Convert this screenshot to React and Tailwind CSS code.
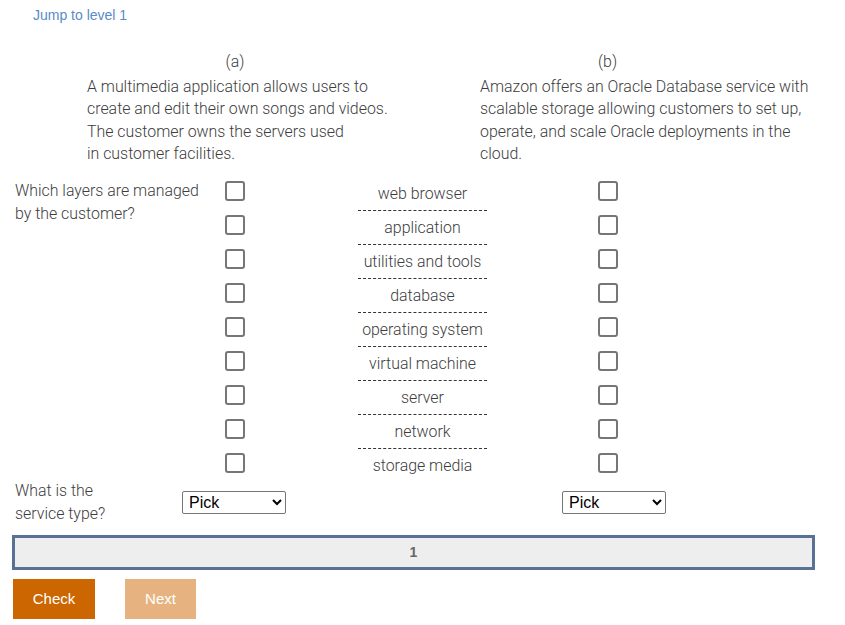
import { useState } from 'react';

const layers = [
  'web browser',
  'application',
  'utilities and tools',
  'database',
  'operating system',
  'virtual machine',
  'server',
  'network',
  'storage media',
];

const Box = ({ checked, onChange }) => (
  <button
    onClick={onChange}
    className="w-5 h-5 border-2 border-[#767676] rounded-[3px] bg-white flex items-center justify-center shrink-0"
  >
    {checked && <span className="w-2.5 h-2.5 bg-[#0075ff]" />}
  </button>
);

const PickSelect = () => (
  <select className="w-[104px] h-[23px] border border-[#767676] rounded-[2px] bg-white text-[16px] text-black pl-[2px] font-['Liberation_Sans',Arial,sans-serif]">
    <option>Pick</option>
    <option>SaaS</option>
    <option>PaaS</option>
    <option>IaaS</option>
  </select>
);

export default function App() {
  const [a, setA] = useState(Array(9).fill(false));
  const [b, setB] = useState(Array(9).fill(false));

  const toggle = (arr, set, i) => set(arr.map((v, j) => (j === i ? !v : v)));

  return (
    <div className="w-[845px] h-[625px] bg-white text-[#3d3d3d] font-['Roboto',sans-serif] font-light text-[15.9px]">
      {/* Jump link */}
      <div className="pl-[33px] pt-[7px] leading-4 text-[14px] font-normal text-[#5a8bc5] font-['Liberation_Sans',Arial,sans-serif]">
        Jump to level 1
      </div>

      {/* Descriptions */}
      <div className="flex mt-[28px] leading-[22px]">
        <div className="ml-[87px] w-[304px]">
          <div className="text-center pr-[8px]">(a)</div>
          <div className="mt-[3px] leading-[22.3px]">
            A multimedia application allows users to<br />
            create and edit their own songs and videos.<br />
            The customer owns the servers used<br />
            in customer facilities.
          </div>
        </div>
        <div className="ml-[89px] w-[345px]">
          <div className="pl-[118px] text-left">(b)</div>
          <div className="mt-[3px] leading-[22.3px]">
            Amazon offers an Oracle Database service with<br />
            scalable storage allowing customers to set up,<br />
            operate, and scale Oracle deployments in the<br />
            cloud.
          </div>
        </div>
      </div>

      {/* Layers question */}
      <div className="flex mt-[11px]">
        <div className="pl-[15px] w-[225px] leading-[23px] pt-[3px]">
          Which layers are managed<br />by the customer?
        </div>
        <div>
          {layers.map((l, i) => (
            <div key={l} className="flex h-[34px]">
              <div className="pt-[5px]">
                <Box checked={a[i]} onChange={() => toggle(a, setA, i)} />
              </div>
              <div className="w-[113px]" />
              <div
                className={`w-[129px] flex items-center justify-center pt-[1px] ${i > 0 ? 'border-t border-dashed border-[#333]' : ''}`}
              >
                {l}
              </div>
              <div className="w-[111px]" />
              <div className="pt-[5px]">
                <Box checked={b[i]} onChange={() => toggle(b, setB, i)} />
              </div>
            </div>
          ))}
        </div>
      </div>

      {/* Service type */}
      <div className="flex items-center -mt-[3px]">
        <div className="pl-[15px] w-[182px] leading-[23px]">
          What is the<br />service type?
        </div>
        <PickSelect />
        <div className="w-[276px]" />
        <PickSelect />
      </div>

      {/* Progress */}
      <div className="mx-[12px] mt-[10px] w-[803px] h-[35px] border-[3px] border-[#5a7196] bg-[#eeeeee] flex items-center justify-center text-[14px] font-bold text-[#666] font-['Liberation_Sans',Arial,sans-serif]">
        1
      </div>

      {/* Buttons */}
      <div className="flex gap-[30px] pl-[13px] mt-[9px] font-['Liberation_Sans',Arial,sans-serif] font-normal text-[15px] text-white">
        <button className="w-[82px] h-[40px] bg-[#cc6600]">Check</button>
        <button className="w-[71px] h-[40px] bg-[#e6b380] cursor-default">Next</button>
      </div>
    </div>
  );
}
